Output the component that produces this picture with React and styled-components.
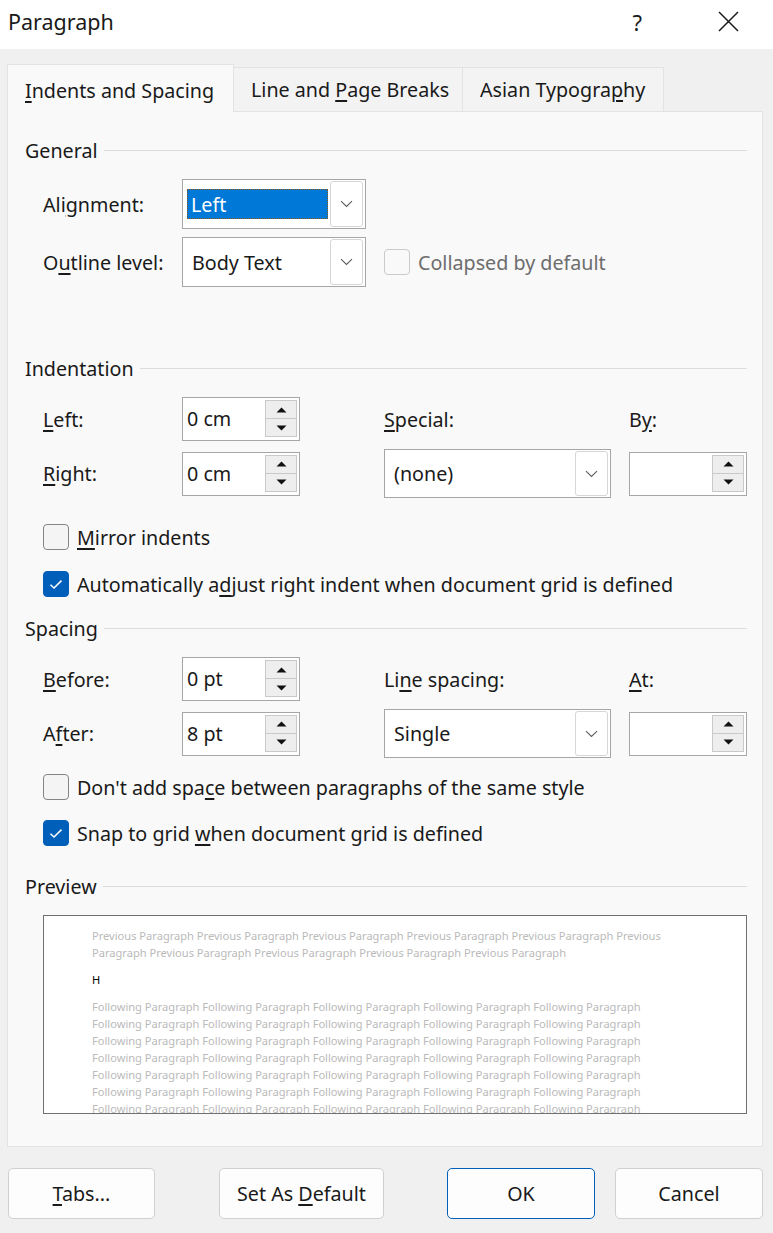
import styled, { createGlobalStyle, css } from "styled-components";

const GlobalStyle = createGlobalStyle`
    html, body {
        margin: 0;
        padding: 0;
        background: #f0f0f0;
    }
    body {
        font-family: "Noto Sans", "Open Sans", sans-serif;
        color: #1a1a1a;
    }
    * {
        box-sizing: border-box;
    }
`;

const Chevron = () => (
    <svg width="13" height="8" viewBox="0 0 13 8">
        <path d="M1 1.2 L6.5 6.5 L12 1.2" fill="none" stroke="#5c5c5c" strokeWidth="1.1" />
    </svg>
);

const Check = () => (
    <svg width="14" height="11" viewBox="0 0 14 11">
        <path d="M1.5 5.8 L5 9 L12.5 1.6" fill="none" stroke="#ffffff" strokeWidth="1.5" />
    </svg>
);

const Arrow = ({ down }) => (
    <svg width="11" height="6" viewBox="0 0 11 6">
        <path d={down ? "M0.5 0.5 L10.5 0.5 L5.5 5.5 Z" : "M0.5 5.5 L10.5 5.5 L5.5 0.5 Z"} fill="#111" />
    </svg>
);

const CloseIcon = () => (
    <svg width="21" height="21" viewBox="0 0 21 21">
        <path d="M1 1 L20 20 M20 1 L1 20" stroke="#1a1a1a" strokeWidth="1.5" />
    </svg>
);

const Spin = ({ value }) => (
    <SpinBox>
        <SpinValue>{value}</SpinValue>
        <SpinButtons>
            <SpinButton><Arrow /></SpinButton>
            <SpinButton><Arrow down /></SpinButton>
        </SpinButtons>
    </SpinBox>
);

const Select = ({ value, width, height, selected }) => (
    <SelectBox $width={width} $height={height}>
        <SelectValue $selected={selected}>{value}</SelectValue>
        <DropButton><Chevron /></DropButton>
    </SelectBox>
);

const CheckItem = ({ checked, disabled, top, children }) => (
    <CheckRow $top={top} $disabled={disabled}>
        <Box $checked={checked} $disabled={disabled}>{checked && <Check />}</Box>
        <span>{children}</span>
    </CheckRow>
);

const previous = [
    "Previous Paragraph Previous Paragraph Previous Paragraph Previous Paragraph Previous Paragraph Previous",
    "Paragraph Previous Paragraph Previous Paragraph Previous Paragraph Previous Paragraph",
];

const following = Array.from({ length: 7 }, () =>
    "Following Paragraph Following Paragraph Following Paragraph Following Paragraph Following Paragraph"
);

const App = () => {
    return (
        <>
            <GlobalStyle />
            <Window>
                <TitleBar>
                    <Title>Paragraph</Title>
                    <Help>?</Help>
                    <CloseIcon />
                </TitleBar>

                <Content>
                    <TabRow>
                        <Tab $active $width={227}><span><U>I</U>ndents and Spacing</span></Tab>
                        <Tab $width={230}><span>Line and <U>P</U>age Breaks</span></Tab>
                        <Tab $width={202}><span>Asian Typogra<U>p</U>hy</span></Tab>
                    </TabRow>

                    <Panel>
                        <Heading>General</Heading>
                        <GeneralGrid>
                            <Label>Ali<U>g</U>nment:</Label>
                            <Select value="Left" width={184} height={50} selected />
                            <span />
                            <Label>O<U>u</U>tline level:</Label>
                            <Select value="Body Text" width={184} height={50} />
                            <CheckItem top={0} disabled>Collapsed by default</CheckItem>
                        </GeneralGrid>

                        <Heading $top={67}>Indentation</Heading>
                        <FieldGrid $top={15}>
                            <Label><U>L</U>eft:</Label>
                            <Spin value="0 cm" />
                            <span />
                            <Label><U>S</U>pecial:</Label>
                            <span />
                            <Label>B<U>y</U>:</Label>

                            <Label><U>R</U>ight:</Label>
                            <Spin value="0 cm" />
                            <span />
                            <Select value="(none)" width={227} height={49} />
                            <span />
                            <Spin value="" />
                        </FieldGrid>

                        <CheckItem top={26}><U>M</U>irror indents</CheckItem>
                        <CheckItem top={21} checked>Automatically a<U>d</U>just right indent when document grid is defined</CheckItem>

                        <Heading $top={17}>Spacing</Heading>
                        <FieldGrid $top={15}>
                            <Label><U>B</U>efore:</Label>
                            <Spin value="0 pt" />
                            <span />
                            <Label>Li<U>n</U>e spacing:</Label>
                            <span />
                            <Label><U>A</U>t:</Label>

                            <Label>A<U>f</U>ter:</Label>
                            <Spin value="8 pt" />
                            <span />
                            <Select value="Single" width={227} height={49} />
                            <span />
                            <Spin value="" />
                        </FieldGrid>

                        <CheckItem top={16}>Don't add spa<U>c</U>e between paragraphs of the same style</CheckItem>
                        <CheckItem top={20} checked>Snap to grid <U>w</U>hen document grid is defined</CheckItem>

                        <Heading $top={26}>Preview</Heading>
                        <Preview>
                            <PreviewPara>
                                {previous.map((l, i) => <PreviewLine key={i}>{l}</PreviewLine>)}
                            </PreviewPara>
                            <PreviewPara $current>
                                <PreviewLine>H</PreviewLine>
                            </PreviewPara>
                            <PreviewPara>
                                {following.map((l, i) => <PreviewLine key={i}>{l}</PreviewLine>)}
                            </PreviewPara>
                        </Preview>
                    </Panel>

                    <ButtonRow>
                        <Button $width={147}><span><U>T</U>abs...</span></Button>
                        <Button $width={165} $gap={64}><span>Set As <U>D</U>efault</span></Button>
                        <Button $width={148} $gap={63} $primary>OK</Button>
                        <Button $width={148} $gap={20}>Cancel</Button>
                    </ButtonRow>
                </Content>
            </Window>
        </>
    );
};

export default App;

const Window = styled.div`
    width: 773px;
    height: 1233px;
    display: flex;
    flex-direction: column;
    overflow: hidden;
    background: #f0f0f0;
`;

const TitleBar = styled.div`
    height: 49px;
    flex-shrink: 0;
    background: #ffffff;
    display: flex;
    align-items: center;
    padding: 0 34px 6px 8px;
    gap: 76px;
`;

const Title = styled.div`
    flex: 1;
    font-size: 21.5px;
    color: #1a1a1a;
`;

const Help = styled.div`
    font-size: 22px;
    color: #1a1a1a;
`;

const Content = styled.div`
    flex: 1;
    display: flex;
    flex-direction: column;
    padding: 15px 10px 0 7px;
`;

const U = styled.span`
    text-decoration: underline;
    text-underline-offset: 3px;
    text-decoration-thickness: 1.5px;
`;

const TabRow = styled.div`
    height: 47px;
    display: flex;
    align-items: flex-end;
`;

const Tab = styled.div`
    width: ${p => p.$width}px;
    height: ${p => (p.$active ? 48 : 45)}px;
    margin-bottom: -1px;
    margin-left: -1px;
    padding-left: 17px;
    padding-top: ${p => (p.$active ? 3 : 0)}px;
    display: flex;
    align-items: center;
    font-size: 19.7px;
    white-space: nowrap;
    border: 1px solid #e3e3e3;
    border-bottom: ${p => (p.$active ? "none" : "1px solid #e3e3e3")};
    background: ${p => (p.$active ? "#f9f9f9" : "#f3f3f3")};
    position: relative;
    z-index: ${p => (p.$active ? 2 : 1)};

    &:first-child {
        margin-left: 0;
    }
`;

const Panel = styled.div`
    height: 1036px;
    background: #f9f9f9;
    border: 1px solid #e3e3e3;
    padding: 24px 15px 0 17px;
    position: relative;
    z-index: 1;
`;

const Heading = styled.div`
    height: 28px;
    margin-top: ${p => p.$top || 0}px;
    display: flex;
    align-items: center;
    gap: 6px;
    font-size: 19.7px;

    &::after {
        content: "";
        flex: 1;
        height: 1px;
        background: #dcdcdc;
    }
`;

const Label = styled.div`
    font-size: 19.7px;
    white-space: nowrap;
`;

const GeneralGrid = styled.div`
    margin: 15px 0 0 18px;
    display: grid;
    grid-template-columns: 139px 184px auto;
    grid-template-rows: 50px 50px;
    row-gap: 8px;
    align-items: center;
`;

const FieldGrid = styled.div`
    margin: ${p => p.$top}px 0 0 18px;
    display: grid;
    grid-template-columns: 139px 118px 84px 227px 18px 118px;
    grid-template-rows: 44px 49px;
    row-gap: 8px;
    align-items: center;
`;

const SelectBox = styled.div`
    width: ${p => p.$width}px;
    height: ${p => p.$height}px;
    border: 1px solid #a6a6a6;
    background: #ffffff;
    display: flex;
    align-items: center;
    padding: 1px 2px;
`;

const SelectValue = styled.div`
    flex: 1;
    font-size: 19.7px;
    white-space: nowrap;
    ${p => p.$selected
        ? css`
            height: 30px;
            margin: 0 2px 0 2px;
            padding-left: 4px;
            display: flex;
            align-items: center;
            background: #0078d7;
            color: #ffffff;
            outline: 1px dotted #8a5a10;
            outline-offset: -1px;
        `
        : css`
            padding-left: 7px;
        `}
`;

const DropButton = styled.div`
    width: 33px;
    align-self: stretch;
    border: 1px solid #d6d6d6;
    border-radius: 3px;
    background: #ffffff;
    display: flex;
    align-items: center;
    justify-content: center;
`;

const SpinBox = styled.div`
    width: 118px;
    height: 44px;
    border: 1px solid #a6a6a6;
    background: #ffffff;
    display: flex;
    padding: 2px 2px 3px 0;
`;

const SpinValue = styled.div`
    flex: 1;
    padding-left: 4px;
    display: flex;
    align-items: center;
    font-size: 19.7px;
`;

const SpinButtons = styled.div`
    width: 32px;
    display: flex;
    flex-direction: column;
`;

const SpinButton = styled.div`
    flex: 1;
    background: #eeeeee;
    border: 1px solid #c9c9c9;
    display: flex;
    align-items: center;
    justify-content: center;

    & + & {
        border-top: none;
    }
`;

const CheckRow = styled.div`
    height: 26px;
    margin-top: ${p => p.$top || 0}px;
    margin-left: ${p => (p.$top !== undefined ? 18 : 0)}px;
    display: flex;
    align-items: center;
    gap: 8px;
    font-size: 19.7px;
    white-space: nowrap;
    color: ${p => (p.$disabled ? "#6d6d6d" : "#1a1a1a")};
`;

const Box = styled.div`
    width: 26px;
    height: 26px;
    flex-shrink: 0;
    border-radius: 4px;
    display: flex;
    align-items: center;
    justify-content: center;
    border: 1.5px solid ${p => (p.$checked ? "#005fb8" : p.$disabled ? "#cbcbcb" : "#858585")};
    background: ${p => (p.$checked ? "#005fb8" : p.$disabled ? "#f9f9f9" : "#f4f4f4")};
`;

const Preview = styled.div`
    height: 199px;
    margin: 15px 0 0 18px;
    border: 1px solid #707070;
    background: #ffffff;
    padding: 11px 0 0 48px;
    overflow: hidden;
    font-size: 11.1px;
    line-height: 17px;
`;

const PreviewPara = styled.div`
    margin-bottom: 10px;
    color: ${p => (p.$current ? "#000000" : "#bababa")};
`;

const PreviewLine = styled.div`
    white-space: nowrap;
`;

const ButtonRow = styled.div`
    margin-top: 21px;
    padding-left: 1px;
    display: flex;
`;

const Button = styled.div`
    width: ${p => p.$width}px;
    height: 51px;
    margin-left: ${p => p.$gap || 0}px;
    border: 1px solid ${p => (p.$primary ? "#005fb8" : "#d0d0d0")};
    border-radius: 5px;
    background: #fdfdfd;
    display: flex;
    align-items: center;
    justify-content: center;
    font-size: 19.7px;
    white-space: nowrap;
`;
